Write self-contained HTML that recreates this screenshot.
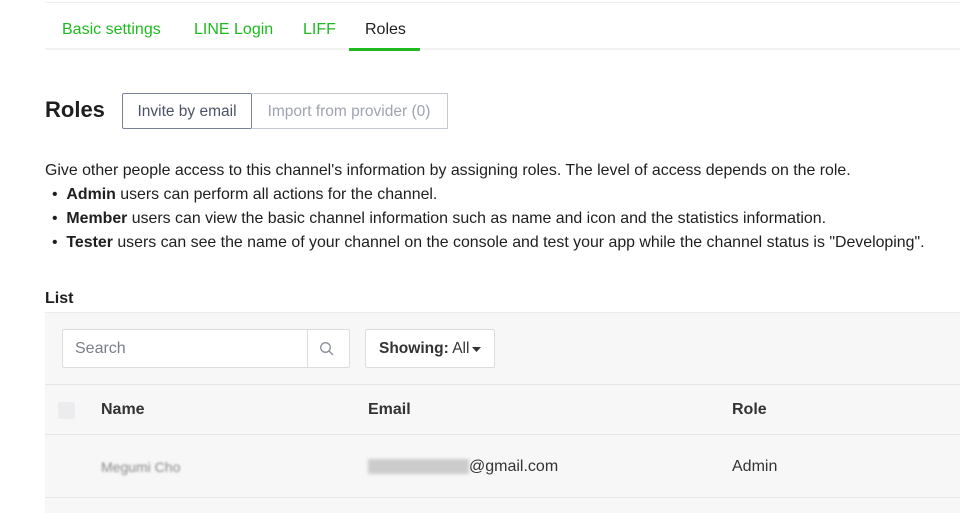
<!DOCTYPE html>
<html><head><style>
body{margin:0;width:960px;height:512px;overflow:hidden;background:#fff;font-family:"Liberation Sans",sans-serif;color:#1e1e1e;position:relative}
.a{position:absolute;white-space:nowrap}
.tab{font-size:16px;color:#1fba1f;top:21px}
</style></head><body>
<div class="a" style="left:45px;top:2px;width:915px;height:1px;background:#eee"></div>
<div class="a tab" style="left:62px">Basic settings</div>
<div class="a tab" style="left:194px">LINE Login</div>
<div class="a tab" style="left:303px">LIFF</div>
<div class="a tab" style="left:365px;color:#1e1e1e">Roles</div>
<div class="a" style="left:45px;top:48px;width:915px;height:2px;background:#f2f2f2"></div>
<div class="a" style="left:349px;top:48px;width:71px;height:3px;background:#1fba1f"></div>
<div class="a" style="left:45px;top:97px;font-size:22px;font-weight:bold">Roles</div>
<div class="a" style="left:122px;top:93px;width:128px;height:34px;border:1px solid #7a8296;border-radius:2px 0 0 2px;font-size:15.5px;color:#4c5366;line-height:36px;text-align:center">Invite by email</div>
<div class="a" style="left:251px;top:93px;width:196px;height:34px;border:1px solid #c4c8d2;border-left:none;font-size:15.5px;color:#a0a4b0;line-height:36px;text-align:center">Import from provider (0)</div>
<div class="a" style="left:45px;top:162px;font-size:15.9px">Give other people access to this channel's information by assigning roles. The level of access depends on the role.</div>
<div class="a" style="left:52px;top:186px;font-size:15.9px">•&nbsp;&nbsp;<b>Admin</b> users can perform all actions for the channel.</div>
<div class="a" style="left:52px;top:210px;font-size:15.9px">•&nbsp;&nbsp;<b>Member</b> users can view the basic channel information such as name and icon and the statistics information.</div>
<div class="a" style="left:52px;top:234px;font-size:15.9px">•&nbsp;&nbsp;<b>Tester</b> users can see the name of your channel on the console and test your app while the channel status is "Developing".</div>
<div class="a" style="left:45px;top:290px;font-size:16px;font-weight:bold">List</div>
<div class="a" style="left:45px;top:312px;width:915px;height:200px;background:#f7f7f8;border-top:1px solid #ececec"></div>
<div class="a" style="left:62px;top:329px;width:286px;height:37px;background:#fff;border:1px solid #dcdde0;border-radius:2px"></div>
<div class="a" style="left:307px;top:330px;width:1px;height:37px;background:#dcdde0"></div>
<div class="a" style="left:75px;top:340px;font-size:16px;color:#7a7e88">Search</div>
<svg class="a" style="left:319px;top:341px" width="16" height="16" viewBox="0 0 16 16"><circle cx="6.5" cy="6.5" r="4.8" fill="none" stroke="#8a8e98" stroke-width="1.3"/><path d="M10 10l4 4" stroke="#8a8e98" stroke-width="1.3"/></svg>
<div class="a" style="left:365px;top:329px;width:128px;height:37px;background:#fff;border:1px solid #dcdde0;border-radius:2px"></div>
<div class="a" style="left:379px;top:340px;font-size:15.5px;color:#333"><b>Showing:</b> All</div>
<svg class="a" style="left:472px;top:347px" width="10" height="6"><path d="M0 0h9l-4.5 5z" fill="#333"/></svg>
<div class="a" style="left:45px;top:384px;width:915px;height:1px;background:#e6e6e8"></div>
<div class="a" style="left:58px;top:402px;width:17px;height:17px;background:#ececee;border-radius:2px"></div>
<div class="a" style="left:101px;top:401px;font-size:16px;font-weight:bold;color:#333">Name</div>
<div class="a" style="left:368px;top:401px;font-size:16px;font-weight:bold;color:#333">Email</div>
<div class="a" style="left:732px;top:401px;font-size:16px;font-weight:bold;color:#333">Role</div>
<div class="a" style="left:45px;top:434px;width:915px;height:1px;background:#e6e6e8"></div>
<div class="a" style="left:101px;top:459px;font-size:14px;color:#888;filter:blur(1px)">Megumi Cho</div>
<div class="a" style="left:368px;top:459px;width:101px;height:15px;background:#ccc;filter:blur(1.5px)"></div>
<div class="a" style="left:469px;top:458px;font-size:16px;color:#333">@gmail.com</div>
<div class="a" style="left:732px;top:458px;font-size:16px;color:#333">Admin</div>
<div class="a" style="left:45px;top:497px;width:915px;height:1px;background:#e6e6e8"></div>
</body></html>
